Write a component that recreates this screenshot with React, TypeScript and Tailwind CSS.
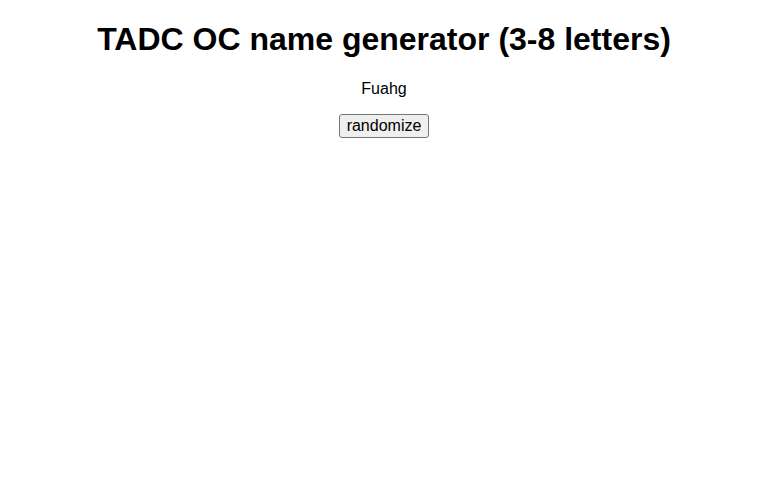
import { useState } from "react";

const letters = "abcdefghijklmnopqrstuvwxyz";

const makeName = (): string => {
  const len = 3 + Math.floor(Math.random() * 6);
  let s = "";
  for (let i = 0; i < len; i++) {
    s += letters[Math.floor(Math.random() * letters.length)];
  }
  return s.charAt(0).toUpperCase() + s.slice(1);
};

const App = (): JSX.Element => {
  const [name, setName] = useState("Fuahg");

  return (
    <div className="font-['Liberation_Sans',Arial,sans-serif] text-black text-center text-[16px] leading-[normal]">
      <h1 className="text-[32px] font-bold pt-[21.44px] pb-[21.44px]">
        TADC OC name generator (3-8 letters)
      </h1>
      <p>{name}</p>
      <p className="mt-[16px]">
        <button
          className="border border-[#767676] bg-[#efefef] rounded-[3px] px-[7px] py-[2px] text-[16px] leading-[normal]"
          onClick={() => setName(makeName())}>
          randomize
        </button>
      </p>
    </div>
  );
};

export default App;
